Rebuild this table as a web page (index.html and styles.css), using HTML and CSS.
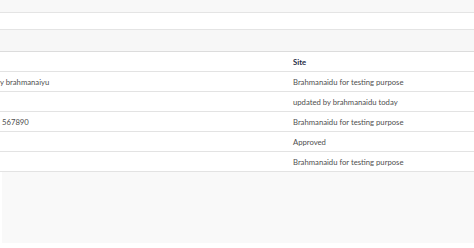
FILE: index.html
```html
<!DOCTYPE html>
<html>
<head>
<meta charset="utf-8">
<link rel="stylesheet" href="styles.css">
</head>
<body>
<div class="page">
  <div class="band band-top"></div>
  <div class="band band-white"></div>
  <div class="band band-grey"></div>
  <div class="table">
    <div class="row head"><div class="c1"></div><div class="c2">Site</div></div>
    <div class="row"><div class="c1">y brahmanaiyu</div><div class="c2">Brahmanaidu for testing purpose</div></div>
    <div class="row"><div class="c1"></div><div class="c2">updated by brahmanaidu today</div></div>
    <div class="row"><div class="c1 num">567890</div><div class="c2">Brahmanaidu for testing purpose</div></div>
    <div class="row"><div class="c1"></div><div class="c2">Approved</div></div>
    <div class="row"><div class="c1"></div><div class="c2">Brahmanaidu for testing purpose</div></div>
  </div>
  <div class="footer-area"><div class="empty"></div></div>
</div>
</body>
</html>
```

FILE: styles.css
```css
html, body {
  margin: 0;
  padding: 0;
  background: #ffffff;
}
.page {
  width: 474px;
  height: 248px;
  display: flex;
  flex-direction: column;
  font-family: Lato, "Open Sans", sans-serif;
  font-size: 7.7px;
  color: #4f4f4f;
  overflow: hidden;
}
.band {
  border-bottom: 1px solid #e4e4e4;
}
.band-top {
  height: 12px;
  background: #f8f8f8;
}
.band-white {
  height: 16px;
  background: #ffffff;
}
.band-grey {
  height: 21px;
  background: #f7f7f7;
  border-bottom: 1px solid #dcdcdc;
}
.table {
  display: flex;
  flex-direction: column;
}
.row {
  height: 19px;
  display: grid;
  grid-template-columns: 293px 1fr;
  align-items: center;
  border-bottom: 1px solid #e3e3e3;
}
.row.head {
  color: #1f2b45;
  font-weight: 700;
}
.c1.num {
  padding-left: 2px;
}
.footer-area {
  flex: 1;
  display: flex;
  padding: 0 0 5px 2px;
}
.empty {
  flex: 1;
  background: #f9f9f9;
}
```
